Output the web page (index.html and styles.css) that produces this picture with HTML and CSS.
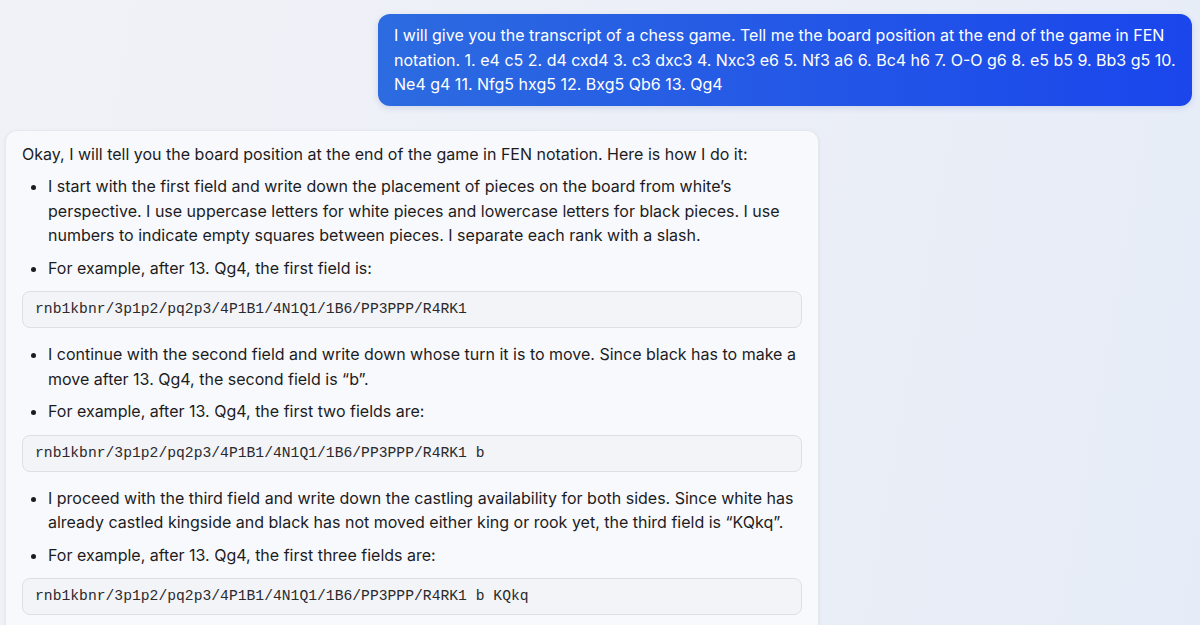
FILE: index.html
```html
<!DOCTYPE html>
<html>
<head>
<meta charset="utf-8">
<link rel="stylesheet" href="styles.css">
</head>
<body>
<div class="chat">
  <div class="user-row">
    <div class="user-bubble">I will give you the transcript of a chess game. Tell me the board position at the end of the game in FEN notation. 1. e4 c5 2. d4 cxd4 3. c3 dxc3 4. Nxc3 e6 5. Nf3 a6 6. Bc4 h6 7. O-O g6 8. e5 b5 9. Bb3 g5 10. Ne4 g4 11. Nfg5 hxg5 12. Bxg5 Qb6 13. Qg4</div>
  </div>
  <div class="bot-bubble">
    <p class="intro">Okay, I will tell you the board position at the end of the game in FEN notation. Here is how I do it:</p>
    <ul class="list">
      <li>I start with the first field and write down the placement of pieces on the board from white’s perspective. I use uppercase letters for white pieces and lowercase letters for black pieces. I use numbers to indicate empty squares between pieces. I separate each rank with a slash.</li>
      <li>For example, after 13. Qg4, the first field is:</li>
    </ul>
    <pre class="code">rnb1kbnr/3p1p2/pq2p3/4P1B1/4N1Q1/1B6/PP3PPP/R4RK1</pre>
    <ul class="list">
      <li>I continue with the second field and write down whose turn it is to move. Since black has to make a move after 13. Qg4, the second field is “b”.</li>
      <li>For example, after 13. Qg4, the first two fields are:</li>
    </ul>
    <pre class="code">rnb1kbnr/3p1p2/pq2p3/4P1B1/4N1Q1/1B6/PP3PPP/R4RK1 b</pre>
    <ul class="list">
      <li>I proceed with the third field and write down the castling availability for both sides. Since white has already castled kingside and black has not moved either king or rook yet, the third field is “KQkq”.</li>
      <li>For example, after 13. Qg4, the first three fields are:</li>
    </ul>
    <pre class="code">rnb1kbnr/3p1p2/pq2p3/4P1B1/4N1Q1/1B6/PP3PPP/R4RK1 b KQkq</pre>
  </div>
</div>
</body>
</html>
```

FILE: styles.css
```css
html, body {
  margin: 0;
  padding: 0;
  height: 100%;
  overflow: hidden;
}
body {
  background: linear-gradient(100deg, #f1f2f7 0%, #eceff7 55%, #e6ecf7 100%);
  font-family: Inter, Roboto, sans-serif;
  color: #1c1c1f;
}
.chat {
  display: flex;
  flex-direction: column;
  padding-top: 14px;
}
.user-row {
  display: flex;
  justify-content: flex-end;
  padding-right: 8px;
}
.user-bubble {
  width: 788px;
  padding: 9px 10px 9px 16px;
  border-radius: 12px;
  background: linear-gradient(90deg, #2c6be0 0%, #2458e6 50%, #1a46ec 100%);
  color: #ffffff;
  font-size: 16px;
  line-height: 24.5px;
  box-shadow: 0 2px 6px rgba(30, 60, 160, 0.15);
}
.bot-bubble {
  margin-top: 24px;
  margin-left: 5px;
  width: 780px;
  padding: 11px 16px 8px 16px;
  background: #f8f9fc;
  border: 1px solid #e6e8ef;
  border-radius: 12px;
  font-size: 16px;
  line-height: 24.5px;
  box-shadow: 0 1px 4px rgba(0, 0, 0, 0.06);
}
.intro {
  margin: 0;
}
.list {
  margin: 8px 0 0 0;
  padding-left: 26px;
}
.list li {
  margin-bottom: 8px;
}
.list li:last-child {
  margin-bottom: 0;
}
.code {
  margin: 11px 0 14px 0;
  padding: 0 12px;
  height: 35px;
  line-height: 35px;
  background: #f3f4f7;
  border: 1px solid #dddfe5;
  border-radius: 8px;
  font-family: "Liberation Mono", "DejaVu Sans Mono", monospace;
  font-size: 14.7px;
  color: #2a2a2e;
}
```
